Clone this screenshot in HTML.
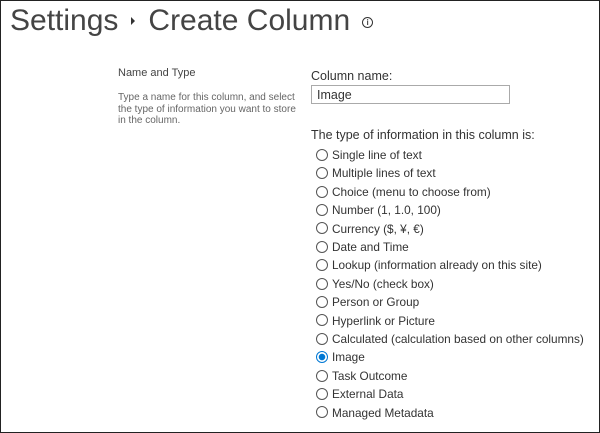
<!DOCTYPE html>
<html><head><style>
body{margin:0;width:600px;height:433px;overflow:hidden;background:#fff;font-family:"Liberation Sans",sans-serif;}
.frame{position:absolute;left:0;top:0;width:598px;height:431px;border:1px solid #222;}
.t{position:absolute;left:10px;top:4px;font-size:30px;color:#444;white-space:nowrap}
.arr{display:inline-block;width:0;height:0;border-left:4px solid #333;border-top:4px solid transparent;border-bottom:4px solid transparent;margin:0 13px 2px 13px;vertical-align:middle}
.info{display:inline-block;width:9px;height:9px;border:1.3px solid #333;border-radius:50%;font-size:8px;line-height:9px;text-align:center;font-weight:bold;vertical-align:middle;margin-left:12px;margin-bottom:0px}
.s{position:absolute;font-size:11px;color:#444}
.d{position:absolute;left:118px;top:92px;width:180px;font-size:10px;line-height:11.5px;color:#666}
.lbl{position:absolute;left:311px;font-size:12.5px;color:#333}
.inp{position:absolute;left:311px;top:85px;width:199px;height:19px;border:1px solid #aaa;box-sizing:border-box;font-size:12.5px;color:#333;padding:2px 0 0 5px}
.r{position:absolute;left:316px;font-size:11.8px;color:#333;height:18px;line-height:18px;white-space:nowrap}
.r i{display:inline-block;width:10px;height:10px;border:1px solid #555;border-radius:50%;vertical-align:middle;margin:-2px 4px 0 0;box-sizing:content-box}
.r i.on{border-color:#0078d4;background:radial-gradient(circle,#0078d4 3px,#fff 3.5px)}
</style></head><body>
<div class="frame"></div>
<div class="t">Settings<span class="arr"></span>Create Column<span class="info">i</span></div>
<div class="s" style="left:118px;top:67px">Name and Type</div>
<div class="d">Type a name for this column, and select the type of information you want to store in the column.</div>
<div class="lbl" style="top:69px">Column name:</div>
<div class="inp">Image</div>
<div class="lbl" style="top:128px">The type of information in this column is:</div>
<div class="r" style="top:146px"><i></i>Single line of text</div>
<div class="r" style="top:164.4px"><i></i>Multiple lines of text</div>
<div class="r" style="top:182.8px"><i></i>Choice (menu to choose from)</div>
<div class="r" style="top:201.2px"><i></i>Number (1, 1.0, 100)</div>
<div class="r" style="top:219.6px"><i></i>Currency ($, ¥, €)</div>
<div class="r" style="top:238px"><i></i>Date and Time</div>
<div class="r" style="top:256.4px"><i></i>Lookup (information already on this site)</div>
<div class="r" style="top:274.8px"><i></i>Yes/No (check box)</div>
<div class="r" style="top:293.2px"><i></i>Person or Group</div>
<div class="r" style="top:311.6px"><i></i>Hyperlink or Picture</div>
<div class="r" style="top:330px"><i></i>Calculated (calculation based on other columns)</div>
<div class="r" style="top:348.4px"><i class="on"></i>Image</div>
<div class="r" style="top:366.8px"><i></i>Task Outcome</div>
<div class="r" style="top:385.2px"><i></i>External Data</div>
<div class="r" style="top:403.6px"><i></i>Managed Metadata</div>
</body></html>
